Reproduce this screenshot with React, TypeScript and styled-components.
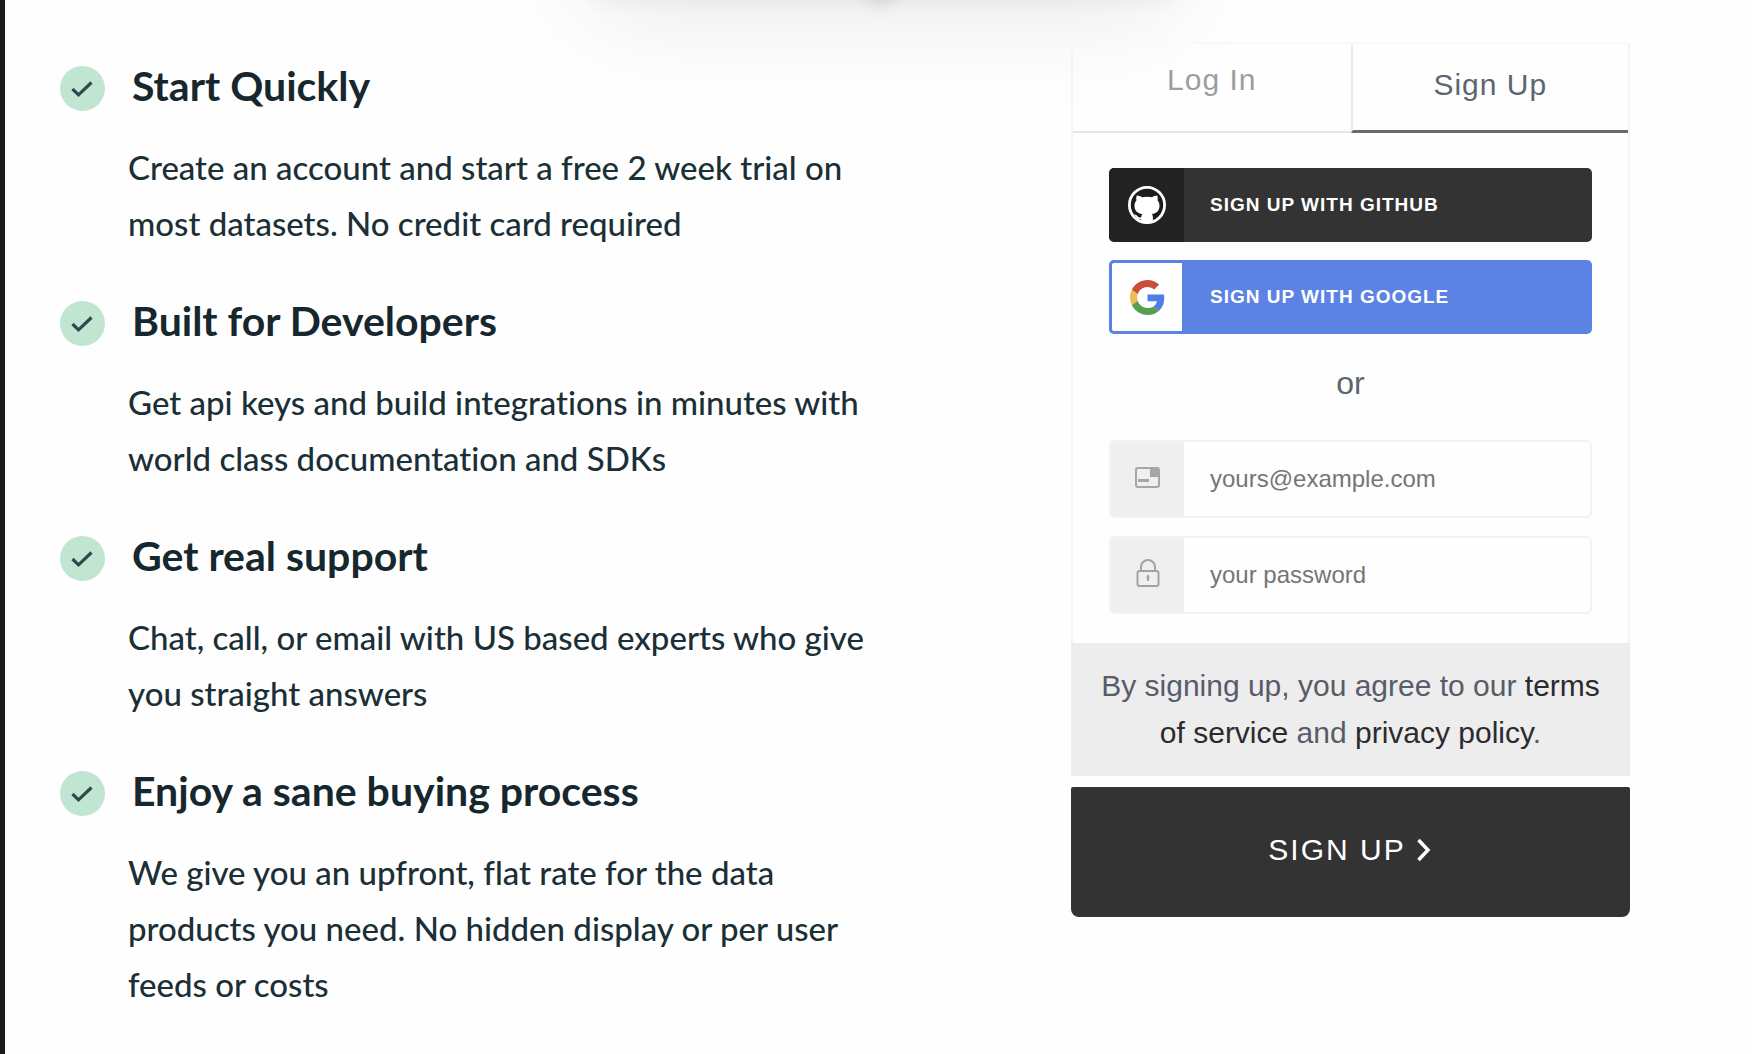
import React, { useState } from "react";
import styled, { createGlobalStyle } from "styled-components";

const GlobalStyle = createGlobalStyle`
  *, *::before, *::after { box-sizing: border-box; }
  body { margin: 0; background: #fefefe; }
  button, input { font: inherit; }
`;

const sans = `"Liberation Sans", Arial, Helvetica, sans-serif`;

const Page = styled.main`
  position: relative;
  overflow: hidden;
  min-height: 100vh;
  display: grid;
  grid-template-columns: minmax(0, 1fr) minmax(320px, 559px);
  align-items: start;
  column-gap: 48px;
  padding: 42px 122px 40px 55px;
  border-left: 5px solid #1a1a1a;
  background: #fefefe;
  font-family: ${sans};
`;

/* Lower edge of the menu that hangs above the section, with its caret. */
const MenuShadow = styled.div`
  position: absolute;
  top: -104px;
  left: 50%;
  width: 580px;
  height: 96px;
  margin-left: -288px;
  border-radius: 12px;
  box-shadow: 0 2px 24px rgba(0, 0, 0, 0.1), 0 12px 110px rgba(0, 0, 0, 0.1);
  pointer-events: none;

  &::after {
    content: "";
    position: absolute;
    top: 84px;
    left: 50%;
    width: 16px;
    height: 16px;
    margin-left: -8px;
    transform: rotate(45deg);
    box-shadow: 2px 2px 20px rgba(0, 0, 0, 0.26);
  }
`;

const Features = styled.ul`
  display: flex;
  flex-direction: column;
  gap: 50px;
  margin: 0;
  padding: 24px 0 0;
  list-style: none;
  font-family: Lato, "Open Sans", sans-serif;
  font-variant-ligatures: none;
  color: #1b2f37;
`;

const Feature = styled.li`
  display: grid;
  grid-template-columns: 45px minmax(0, 1fr);
  row-gap: 28px;
`;

const Badge = styled.span`
  display: grid;
  place-items: center;
  width: 45px;
  height: 45px;
  border-radius: 50%;
  background: #c0e5d0;
`;

const FeatureTitle = styled.h2`
  margin: 0;
  padding-left: 27px;
  font-size: 41px;
  line-height: 40px;
  font-weight: 700;
  color: #16272e;
`;

const FeatureText = styled.p`
  grid-column: 2;
  max-width: 788px;
  margin: 0;
  padding-left: 23px;
  font-size: 33px;
  line-height: 56px;
  font-weight: 500;
`;

const Card = styled.form`
  position: relative;
  display: flex;
  flex-direction: column;
  margin: 0;
`;

const CardBody = styled.div`
  border: 2px solid #f3f4f6;
  border-top-color: #f7f9fb;
  border-bottom: 0;
  border-radius: 4px 4px 0 0;
`;

const Tabs = styled.div`
  display: grid;
  grid-template-columns: 1fr 1fr;
`;

const Tab = styled.button<{ $active: boolean }>`
  height: 89px;
  padding: 0 0 ${(p) => (p.$active ? 4 : 16)}px;
  border: 0;
  border-bottom: ${(p) => (p.$active ? "3px solid #646b73" : "2px solid #e3e5e8")};
  background: transparent;
  font-size: 30px;
  letter-spacing: 1px;
  color: ${(p) => (p.$active ? "#5c666f" : "#9b9da3")};
  cursor: pointer;

  & + & { border-left: 2px solid #e9eaed; }
`;

const Fields = styled.div`
  display: flex;
  flex-direction: column;
  gap: 18px;
  padding: 35px 36px 29px;
`;

const SocialButton = styled.button<{ $color: string }>`
  display: flex;
  align-items: stretch;
  height: 74px;
  padding: 0;
  overflow: hidden;
  border: 0;
  border-radius: 5px;
  background: ${(p) => p.$color};
  color: #fff;
  font-size: 19px;
  font-weight: 700;
  letter-spacing: 1px;
  text-transform: uppercase;
  cursor: pointer;
`;

const SocialIcon = styled.span<{ $fill: string; $edge: string }>`
  display: grid;
  place-items: center;
  flex: 0 0 75px;
  border: 3px solid ${(p) => p.$edge};
  border-right-width: 2px;
  border-radius: 5px 0 0 5px;
  background: ${(p) => p.$fill};
`;

const SocialLabel = styled.span`
  align-self: center;
  padding-left: 26px;
`;

const Divider = styled.p`
  margin: 13px 0 21px;
  text-align: center;
  font-size: 32px;
  line-height: 36px;
  color: #5c666f;
`;

const Field = styled.label`
  display: flex;
  height: 78px;
  overflow: hidden;
  border: 2px solid #f2f2f2;
  border-radius: 5px;
`;

const FieldIcon = styled.span`
  display: grid;
  place-items: center;
  flex: 0 0 73px;
  padding-bottom: 4px;
  background: #efefef;
`;

const FieldInput = styled.input`
  flex: 1;
  min-width: 0;
  padding: 0 26px;
  border: 0;
  outline: 0;
  background: transparent;
  font-size: 24px;
  color: #333;

  &::placeholder { color: #757575; opacity: 1; }
`;

const Terms = styled.p`
  margin: 0;
  padding: 19px 24px 20px;
  background: #ededed;
  text-align: center;
  font-size: 30px;
  line-height: 47px;
  color: #575c69;
`;

const TermsLink = styled.a`
  color: #2b2b2d;
  text-decoration: none;
`;

const Submit = styled.button`
  display: flex;
  align-items: center;
  justify-content: center;
  gap: 10px;
  height: 130px;
  margin-top: 11px;
  padding: 0 0 4px;
  border: 0;
  border-radius: 2px 2px 8px 8px;
  background: #333;
  color: #fff;
  font-size: 30px;
  letter-spacing: 2px;
  cursor: pointer;
`;

const CheckIcon = () => (
  <svg width="23" height="18" viewBox="0 0 23 18" fill="none" aria-hidden="true">
    <path d="M1.500 9 7.500 14.800 20.500 2.500" stroke="#2b4b4c" strokeWidth="3.200" />
  </svg>
);

const GithubIcon = () => (
  <svg width="40" height="40" viewBox="0 0 40 40" aria-hidden="true">
    <circle cx="20" cy="20" r="17.6" fill="#1c1c1c" stroke="#fff" strokeWidth="2.8" />
    <path
      fill="#fff"
      d="M9.800 10.600c2 0 3.800.8 5.200 1.700a22 22 0 0 1 10 0c1.400-.9 3.200-1.700 5.200-1.700.7 1.700.7 3.300.3 4.700 1.400 1.600 2 3.400 2 5.500 0 5.300-3.300 7.600-7.600 8.300.7.900 1 1.900 1 3.300v5l-5.900 1-5.900-1v-3.200c-3.600.5-4.800-1.400-5.600-3-.4-.8-1-1.300-1.700-1.700 1.900-.5 3.200.7 4 1.900.8 1.100 1.900 1.400 3.400.9.100-1.300.5-2.400 1-3.200-4.400-.7-7.700-3-7.700-8.300 0-2.100.7-3.900 2-5.500-.4-1.400-.4-3 .3-4.700z"
    />
  </svg>
);

const GoogleIcon = () => (
  <svg width="35" height="35" viewBox="0 0 48 48" aria-hidden="true">
    <path fill="#c94f3d" d="M24 9.500c3.540 0 6.710 1.220 9.210 3.600l6.850-6.850C35.900 2.380 30.470 0 24 0 14.620 0 6.510 5.380 2.560 13.220l7.980 6.190C12.430 13.720 17.740 9.500 24 9.500z" />
    <path fill="#4f7fe5" d="M46.980 24.550c0-1.570-.150-3.090-.380-4.550H24v9.020h12.940c-.580 2.960-2.260 5.480-4.780 7.180l7.730 6c4.510-4.180 7.090-10.360 7.090-17.650z" />
    <path fill="#ecbd54" d="M10.530 28.590c-.480-1.450-.760-2.990-.760-4.590s.270-3.140.760-4.590l-7.980-6.190C.920 16.460 0 20.120 0 24c0 3.880.920 7.540 2.560 10.780l7.970-6.190z" />
    <path fill="#5a9e52" d="M24 48c6.480 0 11.930-2.130 15.890-5.810l-7.730-6c-2.150 1.450-4.920 2.300-8.160 2.300-6.260 0-11.570-4.220-13.470-9.910l-7.980 6.190C6.510 42.620 14.620 48 24 48z" />
  </svg>
);

const EmailIcon = () => (
  <svg width="25" height="21" viewBox="0 0 25 21" aria-hidden="true">
    <rect x="1" y="1" width="23" height="19" rx="2" fill="none" stroke="#a6a6a6" strokeWidth="2" />
    <path d="M15 2h8v8h-8z" fill="#a6a6a6" />
    <path d="M3 13.500h11" stroke="#a6a6a6" strokeWidth="3" />
  </svg>
);

const LockIcon = () => (
  <svg width="24" height="28" viewBox="0 0 24 28" fill="none" stroke="#a3a3a3" strokeWidth="2" aria-hidden="true">
    <rect x="1.500" y="12" width="21" height="15" rx="2" />
    <path d="M5 12V8a7 7 0 0 1 14 0v4" />
    <path d="M12 16v6M10.500 18.500h3" />
  </svg>
);

const ChevronIcon = () => (
  <svg width="17" height="24" viewBox="0 0 17 24" fill="none" aria-hidden="true">
    <path d="M2.500 2 12 12 2.500 22" stroke="#fff" strokeWidth="3.500" />
  </svg>
);

const features = [
  {
    title: "Start Quickly",
    text: "Create an account and start a free 2 week trial on most datasets. No credit card required",
  },
  {
    title: "Built for Developers",
    text: "Get api keys and build integrations in minutes with world class documentation and SDKs",
  },
  {
    title: "Get real support",
    text: "Chat, call, or email with US based experts who give you straight answers",
  },
  {
    title: "Enjoy a sane buying process",
    text: "We give you an upfront, flat rate for the data products you need. No hidden display or per user feeds or costs",
  },
];

const tabs = ["Log In", "Sign Up"];

export default function App() {
  const [active, setActive] = useState("Sign Up");

  return (
    <>
      <GlobalStyle />
      <Page>
        <MenuShadow />
        <Features>
          {features.map((f) => (
            <Feature key={f.title}>
              <Badge>
                <CheckIcon />
              </Badge>
              <FeatureTitle>{f.title}</FeatureTitle>
              <FeatureText>{f.text}</FeatureText>
            </Feature>
          ))}
        </Features>

        <Card onSubmit={(e) => e.preventDefault()}>
          <CardBody>
            <Tabs role="tablist">
              {tabs.map((name) => (
                <Tab
                  key={name}
                  type="button"
                  role="tab"
                  aria-selected={active === name}
                  $active={active === name}
                  onClick={() => setActive(name)}
                >
                  {name}
                </Tab>
              ))}
            </Tabs>
            <Fields>
              <SocialButton type="button" $color="#333">
                <SocialIcon $fill="#222" $edge="#222">
                  <GithubIcon />
                </SocialIcon>
                <SocialLabel>Sign up with GitHub</SocialLabel>
              </SocialButton>
              <SocialButton type="button" $color="#5c83e4">
                <SocialIcon $fill="#fff" $edge="#5c83e4">
                  <GoogleIcon />
                </SocialIcon>
                <SocialLabel>Sign up with Google</SocialLabel>
              </SocialButton>
              <Divider>or</Divider>
              <Field>
                <FieldIcon>
                  <EmailIcon />
                </FieldIcon>
                <FieldInput type="email" aria-label="Email" placeholder="yours@example.com" />
              </Field>
              <Field>
                <FieldIcon>
                  <LockIcon />
                </FieldIcon>
                <FieldInput type="password" aria-label="Password" placeholder="your password" />
              </Field>
            </Fields>
          </CardBody>
          <Terms>
            By signing up, you agree to our <TermsLink href="#terms">terms of service</TermsLink> and{" "}
            <TermsLink href="#privacy">privacy policy</TermsLink>.
          </Terms>
          <Submit type="submit">
            SIGN UP
            <ChevronIcon />
          </Submit>
        </Card>
      </Page>
    </>
  );
}
